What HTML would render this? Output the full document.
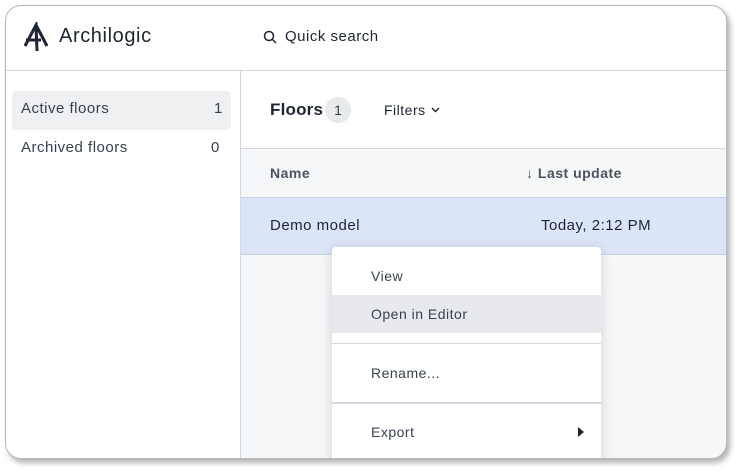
<!DOCTYPE html>
<html><head><style>
*{box-sizing:border-box;margin:0;padding:0}
body{width:742px;height:474px;background:#fff;font-family:"Liberation Sans",sans-serif;position:relative;overflow:hidden;color:#1e2433}
.win{position:absolute;left:5px;top:5px;width:722px;height:454px;border:1px solid #b4b8c0;border-radius:16px;overflow:hidden;background:#fff;box-shadow:3px 4px 6px rgba(0,0,0,.3)}
.abs{position:absolute}
.t{position:absolute;white-space:nowrap;letter-spacing:0.5px}
</style></head><body>
<div class="win">
 <div class="abs" style="left:0;top:64px;width:722px;height:1px;background:#d4d8e0"></div>
 <svg class="abs" style="left:17px;top:16px" width="30" height="32" viewBox="0 0 30 32"><path d="M2 24 L13 3 L14 29 M13 3 L24 24 M3 18 L18 18" stroke="#1e2433" stroke-width="3" fill="none"/></svg>
 <div class="t" style="left:53px;top:19px;font-size:20px;color:#1e2433;letter-spacing:0.6px">Archilogic</div>
 <svg class="abs" style="left:257px;top:24px" width="14" height="14" viewBox="0 0 14 14"><circle cx="6" cy="6" r="4.5" stroke="#1e2433" stroke-width="1.5" fill="none"/><path d="M9.5 9.5 L13 13" stroke="#1e2433" stroke-width="1.5"/></svg>
 <div class="t" style="left:279px;top:22px;font-size:15px">Quick search</div>
 <div class="abs" style="left:234px;top:65px;width:1px;height:400px;background:#d4d8e0"></div>
 <div class="abs" style="left:6px;top:85px;width:219px;height:39px;background:#eff0f2;border-radius:4px"></div>
 <div class="t" style="left:15px;top:94px;font-size:15px;color:#374151">Active floors</div>
 <div class="t" style="left:208px;top:94px;font-size:15px;color:#374151">1</div>
 <div class="t" style="left:15px;top:133px;font-size:15px;color:#374151">Archived floors</div>
 <div class="t" style="left:205px;top:133px;font-size:15px;color:#374151">0</div>
 <div class="abs" style="left:235px;top:143px;width:490px;height:320px;background:#f6f7f9"></div>
 <div class="abs" style="left:235px;top:142px;width:490px;height:1px;background:#d4d8e0"></div>
 <div class="t" style="left:264px;top:94px;font-size:17px;font-weight:bold;letter-spacing:0.2px">Floors</div>
 <div class="abs" style="left:319px;top:91px;width:26px;height:26px;border-radius:13px;background:#e8e9ed;font-size:14px;text-align:center;line-height:26px;color:#374151">1</div>
 <div class="t" style="left:378px;top:96px;font-size:14px">Filters</div>
 <svg class="abs" style="left:425px;top:101px" width="9" height="6" viewBox="0 0 9 6"><path d="M1 1 L4.5 4.5 L8 1" stroke="#1e2433" stroke-width="1.4" fill="none"/></svg>
 <div class="t" style="left:264px;top:159px;font-size:14px;font-weight:bold;color:#4b5260">Name</div>
 <div class="t" style="left:520px;top:159px;font-size:14px;font-weight:bold;color:#4b5260">↓ Last update</div>
 <div class="abs" style="left:235px;top:191px;width:490px;height:58px;background:#dbe5f7;border-top:1px solid #c8d2e6;border-bottom:1px solid #c8d2e6"></div>
 <div class="t" style="left:264px;top:211px;font-size:15px;color:#1e2433">Demo model</div>
 <div class="t" style="left:535px;top:211px;font-size:15px;color:#1e2433">Today, 2:12 PM</div>
 <div class="abs" style="left:326px;top:241px;width:269px;height:220px;background:#fff;border-radius:4px;box-shadow:0 2px 12px rgba(0,0,0,.15)">
  <div class="t" style="left:39px;top:21px;font-size:14px;color:#374151">View</div>
  <div class="abs" style="left:0;top:48px;width:269px;height:38px;background:#e8e9ec"></div>
  <div class="t" style="left:39px;top:59px;font-size:14px;color:#374151">Open in Editor</div>
  <div class="abs" style="left:0;top:96px;width:269px;height:1px;background:#d4d8e0"></div>
  <div class="t" style="left:39px;top:118px;font-size:14px;color:#374151">Rename...</div>
  <div class="abs" style="left:0;top:155px;width:269px;height:2px;background:#d4d8e0"></div>
  <div class="t" style="left:39px;top:177px;font-size:14px;color:#374151">Export</div>
  <svg class="abs" style="left:246px;top:180px" width="6" height="10" viewBox="0 0 6 10"><path d="M0 0 L6 5 L0 10Z" fill="#1e2433"/></svg>
 </div>
</div>
</body></html>
